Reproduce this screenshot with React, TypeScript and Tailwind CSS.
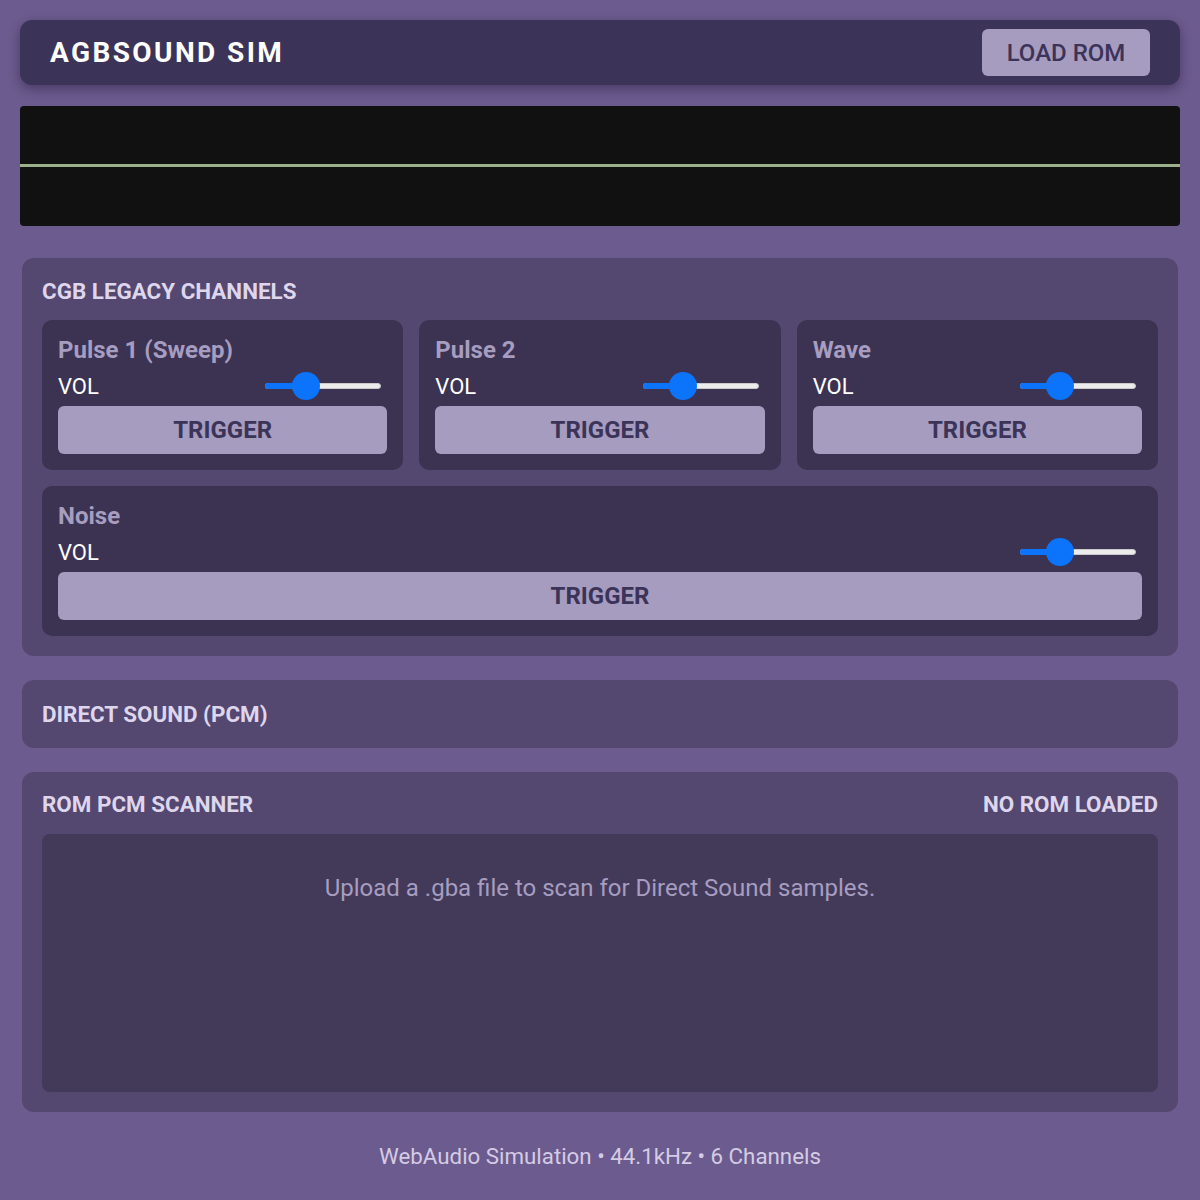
import React from "react";

const font = { fontFamily: "Roboto, 'Noto Sans', sans-serif" };

function Slider({ value }: { value: number }) {
  return (
    <div className="relative w-[116px] h-[30px] mr-[6px]">
      <div className="absolute left-0 right-0 top-[12px] h-[6px] rounded-full bg-[#ececec] border border-[#c9c9c9]" />
      <div
        className="absolute left-0 top-[12px] h-[6px] rounded-full bg-[#0b74fb]"
        style={{ width: `calc(14px + ${value} * 88px)` }}
      />
      <div
        className="absolute top-[1px] w-[28px] h-[28px] rounded-full bg-[#0b74fb]"
        style={{ left: `calc(${value} * 88px)` }}
      />
    </div>
  );
}

function Channel({ name }: { name: string }) {
  return (
    <div className="bg-[#3c3352] rounded-[10px] p-4 flex flex-col">
      <div className="text-[24px] leading-[26px] font-bold text-[#a69dc0] mb-2 pt-[1px]">{name}</div>
      <div className="flex items-center justify-between h-[30px] mb-[5px]">
        <span className="text-[22px] text-white">VOL</span>
        <Slider value={0.3} />
      </div>
      <button className="h-12 w-full rounded-[6px] bg-[#a59cc0] text-[#3c3358] text-[24px] font-bold">
        TRIGGER
      </button>
    </div>
  );
}

export default function App() {
  return (
    <div className="min-h-[1200px] bg-[#6c5b8e] px-5 pt-5 pb-8" style={font}>
      <header className="h-[65px] bg-[#3c3358] rounded-[12px] shadow-[0_4px_12px_rgba(30,20,50,0.45)] flex items-center justify-between pl-[30px] pr-[30px]">
        <h1 className="text-[28px] font-bold tracking-[2.4px] text-white">AGBSOUND SIM</h1>
        <button className="h-[47px] w-[168px] rounded-[6px] bg-[#a59cc0] text-[#3c3358] text-[24px] font-medium">
          LOAD ROM
        </button>
      </header>

      <div className="mt-[21px] h-[120px] bg-[#111111] rounded-[4px] overflow-hidden">
        <svg width="100%" height="120" preserveAspectRatio="none" viewBox="0 0 1160 120">
          <line x1="0" y1="59.5" x2="1160" y2="59.5" stroke="#9db08c" strokeWidth="3" />
        </svg>
      </div>

      <section className="mt-8 mx-[2px] bg-[#544770] rounded-[12px] p-5">
        <h2 className="text-[22.4px] leading-[24px] font-bold text-[#ded6ec] mb-[17px] pt-[1px]">CGB LEGACY CHANNELS</h2>
        <div className="grid grid-cols-3 gap-4">
          <Channel name="Pulse 1 (Sweep)" />
          <Channel name="Pulse 2" />
          <Channel name="Wave" />
          <div className="col-span-3">
            <Channel name="Noise" />
          </div>
        </div>
      </section>

      <section className="mt-6 mx-[2px] bg-[#544770] rounded-[12px] px-5 py-[22px]">
        <h2 className="text-[22.4px] leading-[24px] font-bold text-[#ded6ec]">DIRECT SOUND (PCM)</h2>
      </section>

      <section className="mt-6 mx-[2px] bg-[#544770] rounded-[12px] p-5">
        <div className="flex items-center justify-between mb-[18px]">
          <h2 className="text-[22.4px] leading-[24px] font-bold text-[#ded6ec]">ROM PCM SCANNER</h2>
          <span className="text-[22.4px] leading-[24px] font-bold text-[#ded6ec]">NO ROM LOADED</span>
        </div>
        <div className="h-[258px] bg-[#433a5a] rounded-[8px] pt-[41px] text-center">
          <p className="text-[24px] leading-[26px] text-[#a69dc0]">
            Upload a .gba file to scan for Direct Sound samples.
          </p>
        </div>
      </section>

      <footer className="mt-8 text-center text-[22.3px] leading-[24px] text-[#d4cce4]">
        WebAudio Simulation • 44.1kHz • 6 Channels
      </footer>
    </div>
  );
}
